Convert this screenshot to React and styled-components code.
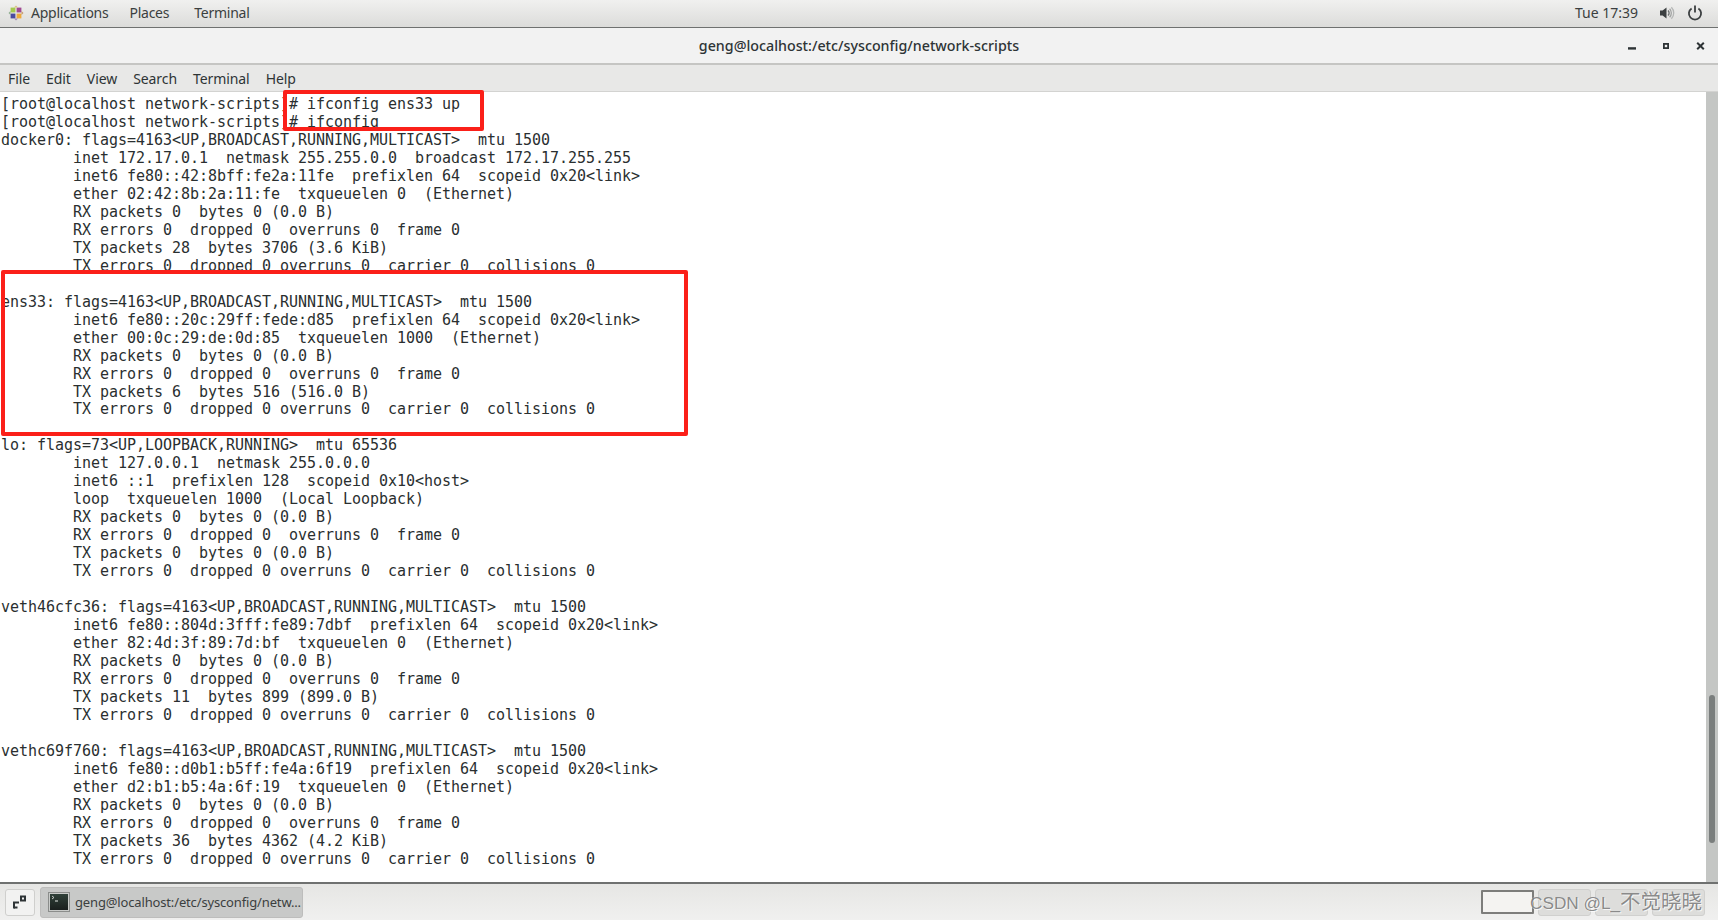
import React from "react";
import styled, { createGlobalStyle } from "styled-components";

const GlobalStyle = createGlobalStyle`
  html, body {
    margin: 0;
    padding: 0;
    height: 100%;
    overflow: hidden;
  }
`;

const Desktop = styled.div`
  display: flex;
  flex-direction: column;
  width: 1718px;
  height: 920px;
  background: #fff;
  font-family: "Noto Sans", "Open Sans", sans-serif;
  color: #2e3436;
  position: relative;
  overflow: hidden;
`;

const TopBar = styled.div`
  display: flex;
  align-items: center;
  height: 28px;
  flex: none;
  box-sizing: border-box;
  padding: 0 15px 2px 8px;
  background: linear-gradient(#f0f0ef, #dcdcda);
  border-bottom: 1px solid #6f7170;
  font-size: 14px;
  letter-spacing: -0.25px;
  color: #3b3f40;
`;

const TopItem = styled.span`
  margin-left: ${(p) => p.$gap}px;
`;

const Spacer = styled.div`
  flex: 1;
`;

const Clock = styled.span`
  margin-right: 21px;
  letter-spacing: 0;
`;

const TitleBar = styled.div`
  position: relative;
  display: flex;
  align-items: center;
  justify-content: center;
  height: 37px;
  flex: none;
  box-sizing: border-box;
  background: #f2f2f2;
  border-bottom: 2px solid #c5c5c3;
  font-size: 14.25px;
  font-weight: 500;
  color: #2e3436;
`;

const WindowControls = styled.div`
  position: absolute;
  right: 9px;
  top: 9px;
  display: flex;
  gap: 20px;
`;

const MenuBar = styled.div`
  display: flex;
  align-items: center;
  gap: 16px;
  height: 27px;
  flex: none;
  box-sizing: border-box;
  padding: 1px 0 0 8px;
  background: #e8e8e7;
  border-bottom: 1px solid #d3d3d1;
  font-size: 14px;
  letter-spacing: -0.08px;
  color: #2e3436;
`;

const TerminalArea = styled.div`
  flex: 1;
  display: flex;
  min-height: 0;
  position: relative;
`;

const Screen = styled.pre`
  flex: 1;
  margin: 0;
  padding: 4px 0 0 1px;
  overflow: hidden;
  font-family: "DejaVu Sans Mono", "Liberation Mono", monospace;
  font-size: 15px;
  letter-spacing: -0.03px;
  line-height: 17.97px;
  color: #2a2f30;
  background: #fff;
`;

const ScrollTrack = styled.div`
  flex: none;
  width: 12px;
  position: relative;
  background: #c4c6c4;
`;

const ScrollThumb = styled.div`
  position: absolute;
  left: 3px;
  top: 603px;
  width: 6px;
  height: 148px;
  border-radius: 3px;
  background: #7a7e7d;
`;

const RedBox = styled.div`
  position: absolute;
  left: ${(p) => p.$x}px;
  top: ${(p) => p.$y}px;
  width: ${(p) => p.$w}px;
  height: ${(p) => p.$h}px;
  box-sizing: border-box;
  border: 4px solid #fb2019;
  border-radius: 2px;
`;

const Taskbar = styled.div`
  display: flex;
  align-items: center;
  height: 38px;
  flex: none;
  box-sizing: border-box;
  padding: 0 13px 0 5px;
  background: linear-gradient(#e6e6e4, #f0f0ef);
  border-top: 2px solid #6f7170;
`;

const ShowDesktop = styled.div`
  display: flex;
  align-items: center;
  justify-content: center;
  width: 30px;
  height: 27px;
  box-sizing: border-box;
  background: #f2f2f1;
  border: 1px solid #cfcfcd;
  border-radius: 3px;
`;

const WindowButton = styled.div`
  display: flex;
  align-items: center;
  gap: 5px;
  width: 263px;
  height: 31px;
  margin-left: 5px;
  box-sizing: border-box;
  padding-left: 7px;
  background: #c8c9c8;
  border: 1px solid #bdbdbc;
  border-radius: 3px;
  font-size: 13px;
  letter-spacing: -0.15px;
  white-space: nowrap;
  color: #3b3f40;

  svg {
    flex: none;
  }
`;

const Workspace = styled.div`
  width: 53px;
  height: ${(p) => (p.$active ? 24 : 27)}px;
  box-sizing: border-box;
  margin-left: ${(p) => (p.$active ? 0 : 4)}px;
  background: ${(p) => (p.$active ? "#f4f3f1" : "#dddddb")};
  border: ${(p) => (p.$active ? "2px solid #7d7d7b" : "1px solid #d0d0ce")};
  border-radius: ${(p) => (p.$active ? 1 : 3)}px;
`;

const Watermark = styled.div`
  position: absolute;
  left: 1530px;
  top: 887px;
  font-family: "Liberation Sans", "Noto Sans CJK SC", sans-serif;
  font-size: 17.2px;
  line-height: 26px;
  color: rgba(125, 125, 125, 0.9);
  text-shadow: 1px 1px 0 rgba(255, 255, 255, 0.75), -1px 0 0 rgba(255, 255, 255, 0.35);
  white-space: nowrap;
`;

const WatermarkCjk = styled.span`
  font-family: "Noto Sans CJK SC", sans-serif;
  font-size: 20.5px;
`;

const CentosLogo = () => (
  <svg width="16" height="16" viewBox="0 0 16 16">
    <rect x="2.6" y="2.6" width="4.8" height="4.8" fill="#a5c94d" />
    <rect x="8.6" y="2.6" width="4.8" height="4.8" fill="#a04a92" />
    <rect x="2.6" y="8.6" width="4.8" height="4.8" fill="#4b4a9e" />
    <rect x="8.6" y="8.6" width="4.8" height="4.8" fill="#eeaa3c" />
    <path d="M8 0.5l2 2H6z" fill="#d9c27a" />
    <path d="M15.5 8l-2 2V6z" fill="#c79a6a" />
    <path d="M8 15.5l-2-2h4z" fill="#a58ab0" />
    <path d="M0.5 8l2-2v4z" fill="#8fae8f" />
  </svg>
);

const VolumeIcon = () => (
  <svg width="16" height="16" viewBox="0 0 16 16" fill="none">
    <path d="M1 5.5h2.6L7.5 2.5v11l-3.9-3H1z" fill="#3b3f40" />
    <path d="M9 5.5a3.4 3.4 0 0 1 0 5" stroke="#6a6e6e" strokeWidth="1.3" />
    <path d="M10.6 3.8a6 6 0 0 1 0 8.4" stroke="#a0a2a1" strokeWidth="1.3" />
    <path d="M12.4 2.2a8.4 8.4 0 0 1 0 11.6" stroke="#b4b6b5" strokeWidth="1.3" />
  </svg>
);

const PowerIcon = () => (
  <svg width="16" height="16" viewBox="0 0 16 16" fill="none" stroke="#3b3f40" strokeWidth="1.8">
    <path d="M8 0.5v7" />
    <path d="M4.6 3.4a6.1 6.1 0 1 0 6.8 0" />
  </svg>
);

const MinimizeIcon = () => (
  <svg width="14" height="14" viewBox="0 0 14 14">
    <rect x="1" y="10.2" width="8" height="2.4" fill="#2e3436" />
  </svg>
);

const MaximizeIcon = () => (
  <svg width="14" height="14" viewBox="0 0 14 14" fill="none">
    <rect x="2.9" y="6.9" width="4.2" height="4.2" stroke="#2e3436" strokeWidth="1.8" />
  </svg>
);

const CloseIcon = () => (
  <svg width="14" height="14" viewBox="0 0 14 14" fill="none">
    <path d="M2.2 5.7l6.6 6.6M8.8 5.7l-6.6 6.6" stroke="#2e3436" strokeWidth="2" />
  </svg>
);

const SwitcherIcon = () => (
  <svg width="16" height="16" viewBox="0 0 16 16" fill="none" stroke="#2e3436" strokeWidth="2">
    <rect x="9" y="2.5" width="4" height="4" />
    <path d="M7 8.5H2v6" />
    <path d="M2 13.5h3.5" />
  </svg>
);

const TerminalIcon = () => (
  <svg width="22" height="20" viewBox="0 0 22 20">
    <defs>
      <linearGradient id="termScreen" x1="0" y1="0" x2="0" y2="1">
        <stop offset="0" stopColor="#2f4038" />
        <stop offset="1" stopColor="#1a1f1e" />
      </linearGradient>
    </defs>
    <rect x="0.5" y="0.5" width="21" height="19" fill="#c9cbc9" stroke="#8b8d8b" />
    <rect x="2" y="2" width="18" height="16" fill="url(#termScreen)" />
    <path d="M4 4l2 1.5L4 7" stroke="#e4e6e4" strokeWidth="0.8" fill="none" />
    <path d="M7 9h3" stroke="#e4e6e4" strokeWidth="1" />
  </svg>
);

const output = `[root@localhost network-scripts]# ifconfig ens33 up
[root@localhost network-scripts]# ifconfig
docker0: flags=4163<UP,BROADCAST,RUNNING,MULTICAST>  mtu 1500
        inet 172.17.0.1  netmask 255.255.0.0  broadcast 172.17.255.255
        inet6 fe80::42:8bff:fe2a:11fe  prefixlen 64  scopeid 0x20<link>
        ether 02:42:8b:2a:11:fe  txqueuelen 0  (Ethernet)
        RX packets 0  bytes 0 (0.0 B)
        RX errors 0  dropped 0  overruns 0  frame 0
        TX packets 28  bytes 3706 (3.6 KiB)
        TX errors 0  dropped 0 overruns 0  carrier 0  collisions 0

ens33: flags=4163<UP,BROADCAST,RUNNING,MULTICAST>  mtu 1500
        inet6 fe80::20c:29ff:fede:d85  prefixlen 64  scopeid 0x20<link>
        ether 00:0c:29:de:0d:85  txqueuelen 1000  (Ethernet)
        RX packets 0  bytes 0 (0.0 B)
        RX errors 0  dropped 0  overruns 0  frame 0
        TX packets 6  bytes 516 (516.0 B)
        TX errors 0  dropped 0 overruns 0  carrier 0  collisions 0

lo: flags=73<UP,LOOPBACK,RUNNING>  mtu 65536
        inet 127.0.0.1  netmask 255.0.0.0
        inet6 ::1  prefixlen 128  scopeid 0x10<host>
        loop  txqueuelen 1000  (Local Loopback)
        RX packets 0  bytes 0 (0.0 B)
        RX errors 0  dropped 0  overruns 0  frame 0
        TX packets 0  bytes 0 (0.0 B)
        TX errors 0  dropped 0 overruns 0  carrier 0  collisions 0

veth46cfc36: flags=4163<UP,BROADCAST,RUNNING,MULTICAST>  mtu 1500
        inet6 fe80::804d:3fff:fe89:7dbf  prefixlen 64  scopeid 0x20<link>
        ether 82:4d:3f:89:7d:bf  txqueuelen 0  (Ethernet)
        RX packets 0  bytes 0 (0.0 B)
        RX errors 0  dropped 0  overruns 0  frame 0
        TX packets 11  bytes 899 (899.0 B)
        TX errors 0  dropped 0 overruns 0  carrier 0  collisions 0

vethc69f760: flags=4163<UP,BROADCAST,RUNNING,MULTICAST>  mtu 1500
        inet6 fe80::d0b1:b5ff:fe4a:6f19  prefixlen 64  scopeid 0x20<link>
        ether d2:b1:b5:4a:6f:19  txqueuelen 0  (Ethernet)
        RX packets 0  bytes 0 (0.0 B)
        RX errors 0  dropped 0  overruns 0  frame 0
        TX packets 36  bytes 4362 (4.2 KiB)
        TX errors 0  dropped 0 overruns 0  carrier 0  collisions 0
`;

const menus = ["File", "Edit", "View", "Search", "Terminal", "Help"];

const App = () => {
  return (
    <Desktop>
      <GlobalStyle />
      <TopBar>
        <CentosLogo />
        <TopItem $gap={7}>Applications</TopItem>
        <TopItem $gap={21}>Places</TopItem>
        <TopItem $gap={25}>Terminal</TopItem>
        <Spacer />
        <Clock>Tue 17:39</Clock>
        <VolumeIcon />
        <TopItem $gap={12} />
        <PowerIcon />
      </TopBar>
      <TitleBar>
        geng@localhost:/etc/sysconfig/network-scripts
        <WindowControls>
          <MinimizeIcon />
          <MaximizeIcon />
          <CloseIcon />
        </WindowControls>
      </TitleBar>
      <MenuBar>
        {menus.map((m) => (
          <span key={m}>{m}</span>
        ))}
      </MenuBar>
      <TerminalArea>
        <Screen>{output}</Screen>
        <ScrollTrack>
          <ScrollThumb />
        </ScrollTrack>
        <RedBox $x={283} $y={-2} $w={201} $h={41} />
        <RedBox $x={1} $y={178} $w={687} $h={166} />
      </TerminalArea>
      <Taskbar>
        <ShowDesktop>
          <SwitcherIcon />
        </ShowDesktop>
        <WindowButton>
          <TerminalIcon />
          geng@localhost:/etc/sysconfig/netw...
        </WindowButton>
        <Spacer />
        <Workspace $active />
        <Workspace />
        <Workspace />
        <Workspace />
      </Taskbar>
      <Watermark>
        CSDN @L_<WatermarkCjk>不觉晓晓</WatermarkCjk>
      </Watermark>
    </Desktop>
  );
};

export default App;
